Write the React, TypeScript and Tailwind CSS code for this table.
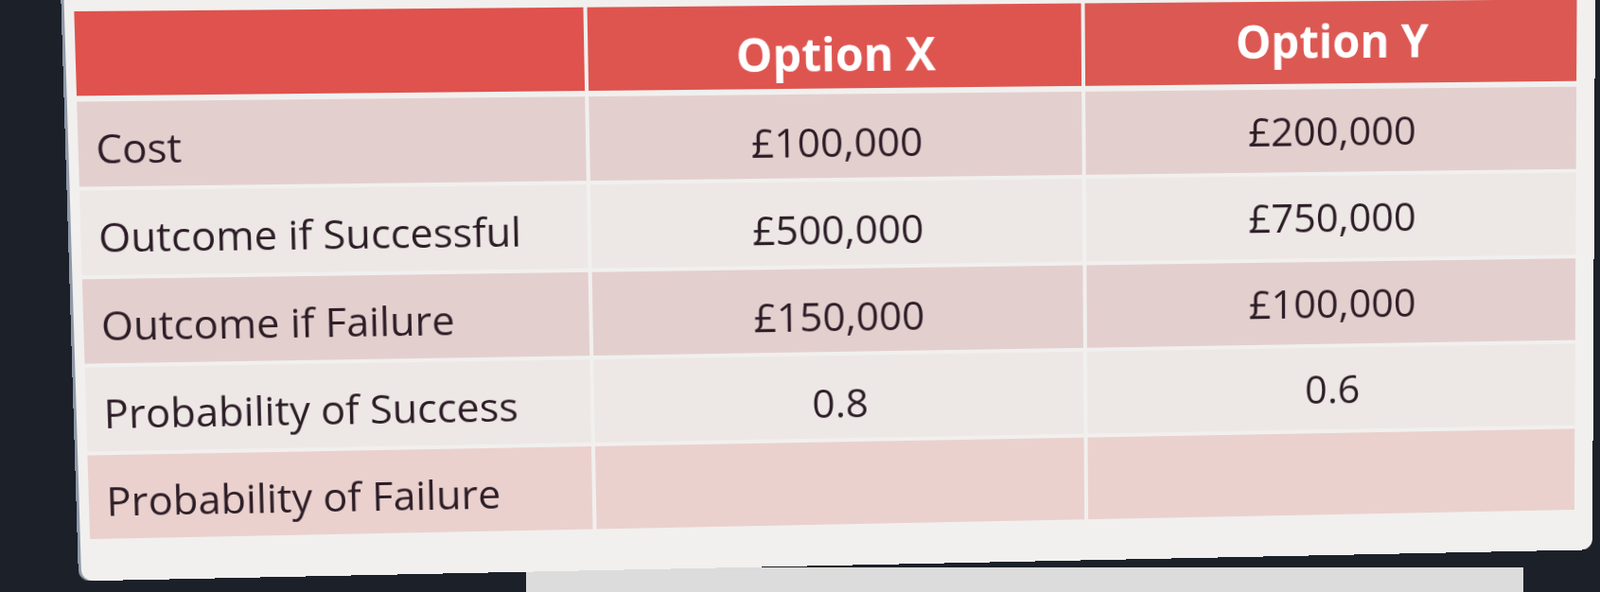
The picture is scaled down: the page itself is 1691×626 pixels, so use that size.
import React from "react";

type Row = {
  label: string;
  x: string;
  y: string;
  tone: "dark" | "light" | "pink";
};

const rows: Row[] = [
  { label: "Cost", x: "£100,000", y: "£200,000", tone: "dark" },
  { label: "Outcome if Successful", x: "£500,000", y: "£750,000", tone: "light" },
  { label: "Outcome if Failure", x: "£150,000", y: "£100,000", tone: "dark" },
  { label: "Probability of Success", x: "0.8", y: "0.6", tone: "light" },
  { label: "Probability of Failure", x: "", y: "", tone: "pink" },
];

function cellBg(tone: Row["tone"]) {
  if (tone === "dark") return "bg-[#e4cfcf]";
  if (tone === "pink") return "bg-[#ead1ce]";
  return "bg-[#ede8e6]";
}

function TableRow({ row }: { row: Row }) {
  const bg = cellBg(row.tone);
  return (
    <div className="grid grid-cols-[523px_519px_529px] gap-x-[4px] h-[88px]">
      <div className={`${bg} flex items-center pl-[18px] pt-[8px]`}>
        <p className="text-[42.5px] leading-none text-[#2c1d26]">{row.label}</p>
      </div>
      <div className={`${bg} flex items-center justify-center pt-[12px]`}>
        <p className="text-[42.5px] leading-none text-[#2c1d26]">{row.x}</p>
      </div>
      <div className={`${bg} flex items-center justify-center`}>
        <p className="text-[42.5px] leading-none text-[#2c1d26]">{row.y}</p>
      </div>
    </div>
  );
}

export default function App() {
  return (
    <div className="relative w-[1691px] h-[626px] overflow-hidden bg-[#1c2029] font-['Open_Sans','Liberation_Sans',sans-serif]">
      <div className="flex flex-col h-full">
        <div className="pl-[90px]">
          <div className="w-[1609px] mt-[-20px] h-[620px] rounded-b-[12px] bg-[#f1f0ee] pl-[10px] pr-[20px] pt-[27px] [transform:perspective(2000px)_rotateX(-2.5deg)_rotateY(2.5deg)_rotate(-0.7deg)] shadow-[-3px_0_0_#8f99a8]">
            <div className="flex flex-col gap-[4px]">
              <div className="grid grid-cols-[523px_519px_529px] gap-x-[4px] h-[87px] mb-[2px]">
                <div className="bg-[#df524d]" />
                <div className="bg-[#de5550] flex items-center justify-center pt-[14px]">
                  <p className="text-[48px] font-bold leading-none text-white">Option X</p>
                </div>
                <div className="bg-[#dc5852] flex items-center justify-center pb-[4px]">
                  <p className="text-[48px] font-bold leading-none text-white">Option Y</p>
                </div>
              </div>
              {rows.map((r) => (
                <TableRow key={r.label} row={r} />
              ))}
            </div>
          </div>
        </div>
        <div className="flex-1 flex">
          <div className="w-[556px]" />
          <div className="w-[1054px] bg-[#dcdcdc]" />
        </div>
      </div>
    </div>
  );
}
